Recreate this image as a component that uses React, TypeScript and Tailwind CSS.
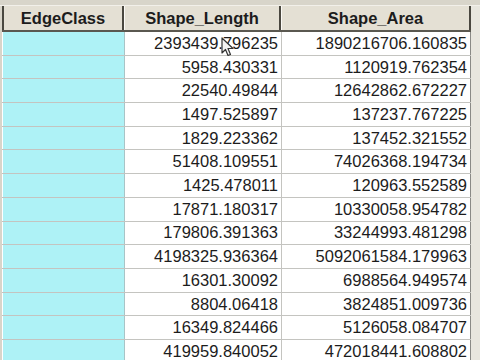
import React from 'react';

const rows: [string, string][] = [
  ['2393439.796235', '1890216706.160835'],
  ['5958.430331', '1120919.762354'],
  ['22540.49844', '12642862.672227'],
  ['1497.525897', '137237.767225'],
  ['1829.223362', '137452.321552'],
  ['51408.109551', '74026368.194734'],
  ['1425.478011', '120963.552589'],
  ['17871.180317', '10330058.954782'],
  ['179806.391363', '33244993.481298'],
  ['4198325.936364', '5092061584.179963'],
  ['16301.30092', '6988564.949574'],
  ['8804.06418', '3824851.009736'],
  ['16349.824466', '5126058.084707'],
  ['419959.840052', '472018441.608802'],
];

function Cursor() {
  return (
    <svg className="absolute left-[221px] top-[37px]" width="14" height="20" viewBox="0 0 14 20">
      <path d="M1 1 L1 16 L4.5 12.5 L7 18.5 L9.5 17.5 L7 11.5 L12 11.5 Z" fill="#f4f4f4" stroke="#333" strokeWidth="1.2" strokeLinejoin="round" />
    </svg>
  );
}

export default function App() {
  return (
    <div className="relative w-[480px] h-[360px] overflow-hidden bg-[#d8d5ca] font-['Liberation_Sans',Arial,sans-serif] text-[16.5px] text-[#1c1c1c]">
      <div className="h-[6px] border-b border-[#f2f0ea]" />
      <div className="flex">
        <div className="w-[2px] shrink-0" />
        <div className="w-[469px] shrink-0 bg-white">
          <div className="flex h-[26px] bg-[#e4e0d4] border-b-2 border-[#5a5850] font-bold">
            <div className="w-[122px] flex items-center justify-center border-l-2 border-l-[#4a4840] border-r-2 border-r-[#4a4840]">EdgeClass</div>
            <div className="w-[157px] flex items-center justify-center border-l border-l-[#fbfaf6] border-r-2 border-r-[#4a4840]">Shape_Length</div>
            <div className="flex-1 flex items-center justify-center border-l border-l-[#fbfaf6] border-r-2 border-r-[#4a4840]">Shape_Area</div>
          </div>
          {rows.map(([len, area], i) => (
            <div key={i} className="flex h-[23.7px] border-b border-[#c4c4c0]">
              <div className="w-[122px] ml-[1px] bg-[#aef2f6] border-r border-[#a9c4c6]" />
              <div className="w-[157px] flex items-center justify-end pr-[3px] border-r border-[#c4c4c0]">{len}</div>
              <div className="flex-1 flex items-center justify-end pr-[3px] border-r border-[#8a8a86]">{area}</div>
            </div>
          ))}
        </div>
        <div className="flex-1 bg-[#e8e6de]" />
      </div>
      <Cursor />
    </div>
  );
}
